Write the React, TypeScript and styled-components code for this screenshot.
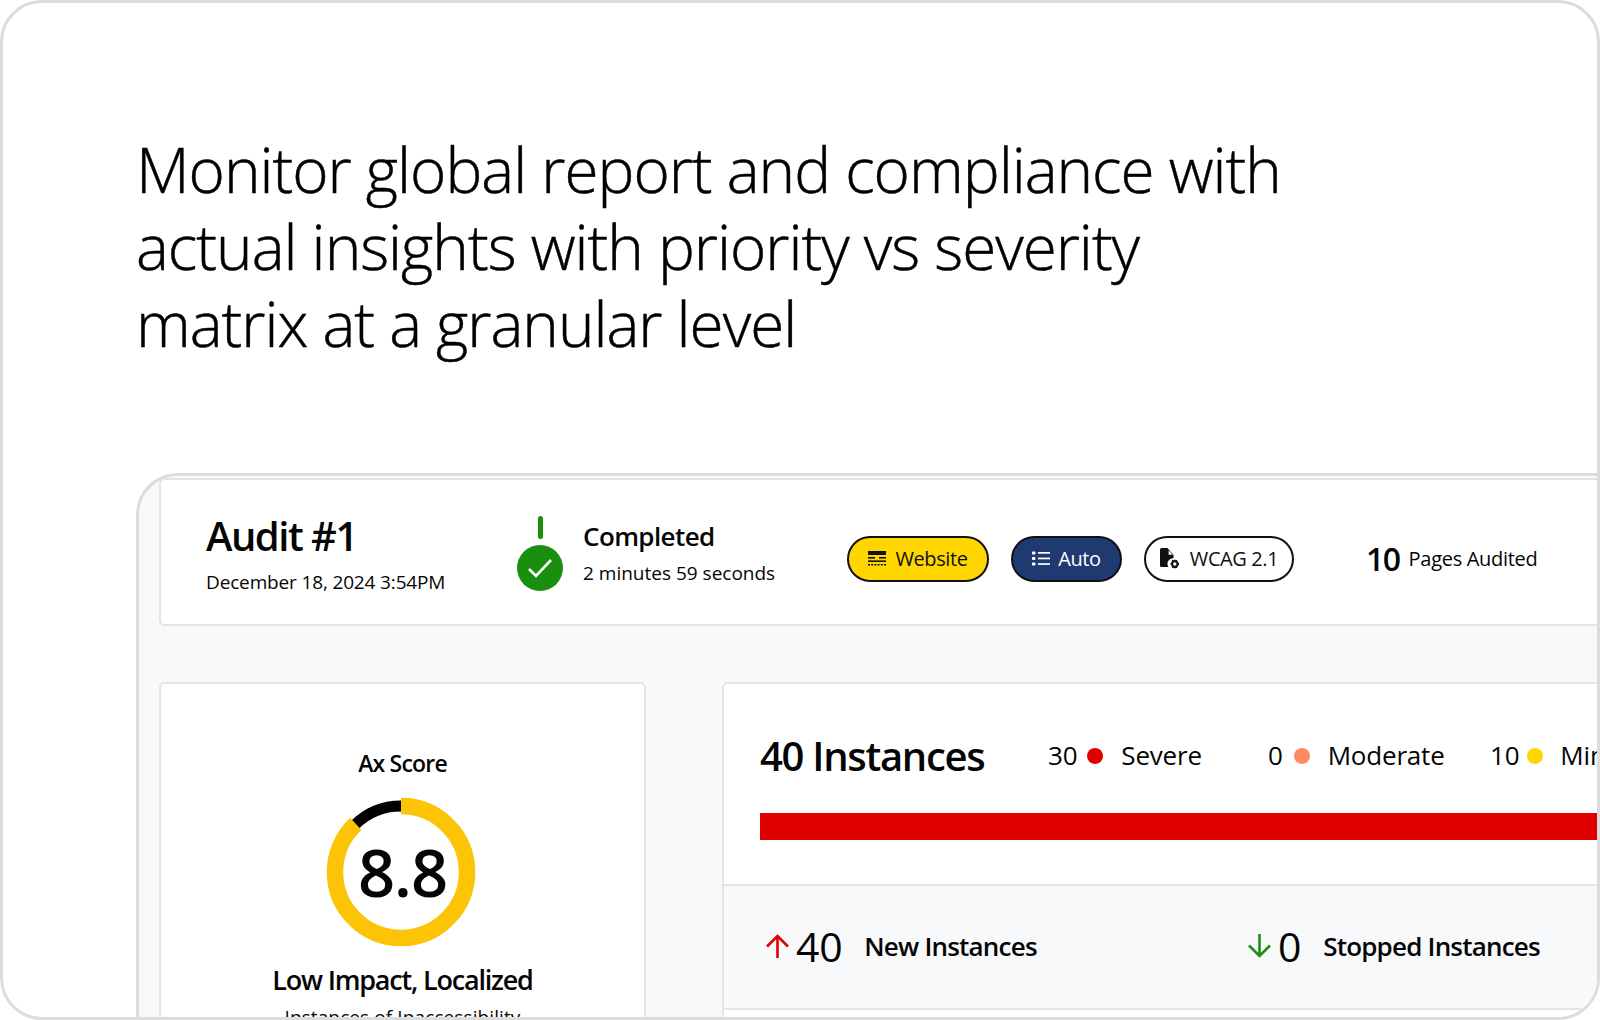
import React from "react";
import styled, { createGlobalStyle } from "styled-components";

const Global = createGlobalStyle`
  html, body { margin: 0; padding: 0; background: #fff; }
  body { font-family: "Open Sans", "Noto Sans", Arial, sans-serif; color: #050505; }
  * { box-sizing: border-box; }
`;

const Frame = styled.main`
  width: 1600px;
  height: 1020px;
  border: 3px solid #dcdcdc;
  border-radius: 42px;
  overflow: hidden;
  background: #fff;
  padding: 128px 0 0 133px;
`;

const Headline = styled.h1`
  margin: 0;
  width: 1165px;
  font-size: 62px;
  line-height: 77px;
  font-weight: 300;
  letter-spacing: -1px;
  -webkit-text-stroke: 0.5px #000;
  color: #000;
`;

const Panel = styled.section`
  margin-top: 111px;
  width: 1560px;
  height: 640px;
  background: #f8f9fb;
  border: 3px solid #dcdcdc;
  border-radius: 42px;
  padding: 2px 0 0 20px;
`;

const TopCard = styled.header`
  height: 148px;
  background: #fff;
  border: 2px solid #e4e4e4;
  border-radius: 6px;
  display: flex;
  align-items: center;
  padding-left: 45px;
`;

const AuditTitle = styled.div`
  width: 311px;
  display: flex;
  flex-direction: column;
`;

const AuditName = styled.div`
  font-size: 40px;
  line-height: 50px;
  font-weight: 600;
  letter-spacing: -1.5px;
`;

const AuditDate = styled.div`
  font-size: 19px;
  line-height: 24px;
  margin-top: 9px;
  letter-spacing: -0.15px;
`;

const StatusIcon = styled.div`
  width: 46px;
  display: flex;
  flex-direction: column;
  align-items: center;
  gap: 6px;
  margin: 2px 20px 0 0;
`;

const StatusTick = styled.span`
  width: 5px;
  height: 23px;
  border-radius: 3px;
  background: #1a8f0f;
`;

const StatusDot = styled.span`
  width: 46px;
  height: 46px;
  border-radius: 50%;
  background: #1a8f0f;
  display: flex;
  align-items: center;
  justify-content: center;
`;

const StatusText = styled.div`
  width: 264px;
  margin-top: 2px;
`;

const StatusTitle = styled.div`
  font-size: 26px;
  line-height: 34px;
  font-weight: 600;
  letter-spacing: -0.6px;
  margin-top: -2px;
`;

const StatusSub = styled.div`
  font-size: 19px;
  line-height: 26px;
  margin-top: 7px;
`;

const Pill = styled.span<{ $bg: string; $fg: string; $w: number; $gap: number }>`
  width: ${(p) => p.$w}px;
  height: 46px;
  margin: 14px 22px 0 0;
  padding-bottom: 2px;
  border: 2px solid #111;
  border-radius: 23px;
  background: ${(p) => p.$bg};
  color: ${(p) => p.$fg};
  font-size: 20px;
  display: flex;
  align-items: center;
  justify-content: center;
  gap: ${(p) => p.$gap}px;
  letter-spacing: -0.4px;
`;

const PagesCount = styled.span`
  margin: 12px 0 0 50px;
  font-size: 32px;
  font-weight: 600;
  letter-spacing: -1.5px;
`;

const PagesLabel = styled.span`
  margin: 12px 0 0 9px;
  font-size: 20px;
  letter-spacing: -0.3px;
`;

const Columns = styled.div`
  display: grid;
  grid-template-columns: 487px 1fr;
  column-gap: 76px;
  margin-top: 56px;
`;

const ScoreCard = styled.aside`
  height: 500px;
  background: #fff;
  border: 2px solid #e4e4e4;
  border-radius: 6px;
  display: flex;
  flex-direction: column;
  align-items: center;
  padding-top: 65px;
`;

const ScoreLabel = styled.div`
  font-size: 23px;
  line-height: 28px;
  font-weight: 600;
  letter-spacing: -0.8px;
`;

const RingWrap = styled.div`
  position: relative;
  width: 150px;
  height: 150px;
  margin: 20px 4px 0 0;
`;

const RingValue = styled.div`
  position: absolute;
  inset: 0 -4px 0 0;
  display: flex;
  align-items: center;
  justify-content: center;
  font-size: 65px;
  font-weight: 600;
  letter-spacing: -1px;
`;

const ImpactTitle = styled.div`
  margin-top: 15px;
  font-size: 27px;
  line-height: 36px;
  font-weight: 600;
  letter-spacing: -1.2px;
`;

const ImpactSub = styled.div`
  margin-top: 6px;
  font-size: 19px;
  line-height: 26px;
  letter-spacing: 0.1px;
`;

const InstanceCard = styled.section`
  height: 500px;
  background: #fff;
  border: 2px solid #e4e4e4;
  border-radius: 6px;
  overflow: hidden;
`;

const InstanceTop = styled.div`
  height: 202px;
  padding: 48px 0 0 36px;
  border-bottom: 2px solid #e4e4e4;
`;

const LegendRow = styled.div`
  display: flex;
  align-items: center;
  height: 46px;
  white-space: nowrap;
`;

const InstanceTitle = styled.div`
  width: 288px;
  font-size: 40px;
  font-weight: 600;
  letter-spacing: -1.3px;
`;

const LegendItem = styled.div<{ $w: number }>`
  width: ${(p) => p.$w}px;
  display: flex;
  align-items: center;
  font-size: 26px;
  letter-spacing: -0.2px;
`;

const Dot = styled.span<{ $c: string; $lead: number; $gap: number }>`
  width: 16px;
  height: 16px;
  border-radius: 50%;
  background: ${(p) => p.$c};
  margin: 2px ${(p) => p.$gap}px 0 ${(p) => p.$lead}px;
`;

const Bar = styled.div`
  height: 27px;
  margin-top: 35px;
  background: #e00000;
`;

const DeltaRow = styled.div`
  height: 124px;
  background: #f8f9fb;
  border-bottom: 2px solid #e4e4e4;
  display: flex;
  align-items: center;
  padding: 0 0 2px 41px;
`;

const Delta = styled.div<{ $w: number }>`
  width: ${(p) => p.$w}px;
  display: flex;
  align-items: center;
`;

const DeltaValue = styled.span`
  font-size: 41px;
  margin: 0 22px 0 6px;
  letter-spacing: -0.3px;
`;

const DeltaLabel = styled.span`
  font-size: 26px;
  font-weight: 600;
  letter-spacing: -0.8px;
`;

const WebsiteIcon = () => (
  <svg width="18" height="16" viewBox="0 0 18 16" fill="#111">
    <rect x="0" y="1" width="18" height="4" />
    <rect x="0" y="7" width="7" height="1.6" />
    <rect x="11" y="7" width="7" height="1.6" />
    <rect x="0" y="10.4" width="18" height="1.6" />
    <path d="M0 14h2v1.6H0zM3.2 14h2v1.6h-2zM6.4 14h2v1.6h-2zM9.6 14h2v1.6h-2zM12.8 14h2v1.6h-2zM16 14h2v1.6h-2z" />
  </svg>
);

const ListIcon = () => (
  <svg width="18" height="15" viewBox="0 0 18 15" fill="#fff">
    <rect x="0" y="0.5" width="3.4" height="3" rx="0.8" />
    <rect x="0" y="6" width="3.4" height="3" rx="0.8" />
    <rect x="0" y="11.5" width="3.4" height="3" rx="0.8" />
    <rect x="6" y="1" width="12" height="1.7" />
    <rect x="6" y="6.6" width="12" height="1.7" />
    <rect x="6" y="12.2" width="12" height="1.7" />
  </svg>
);

const FileGearIcon = () => (
  <svg width="20" height="21" viewBox="0 0 20 21" fill="#111">
    <path d="M1.5 0H7.5l6 7v3.2a5.6 5.6 0 0 0-5 8.8H1.5A1.5 1.5 0 0 1 0 17.5v-16A1.5 1.5 0 0 1 1.5 0z" />
    <path d="M8.6 2.2v4.6h3.9z" fill="#fff" />
    <circle cx="14.8" cy="16" r="2.7" fill="none" stroke="#111" strokeWidth="2" />
    <path d="M13.9 11.8h1.8v1.8h-1.8zM13.9 18.4h1.8v1.8h-1.8zM10.6 15.1h1.8v1.8h-1.8zM17.2 15.1h1.8v1.8h-1.8zM11.6 12.6l1.3-.9 1 1.4-1.3.9zM17.5 12.6l-1.3-.9-1 1.4 1.3.9zM11.6 19.4l1.3.9 1-1.4-1.3-.9zM17.5 19.4l-1.3.9-1-1.4 1.3-.9z" />
  </svg>
);

const Check = () => (
  <svg width="26" height="22" viewBox="0 0 26 22" fill="none" stroke="#fff" strokeWidth="2.6">
    <path d="M2 12l7 7L24 3" />
  </svg>
);

const Arrow = ({ up }: { up: boolean }) => (
  <svg width="25" height="24" viewBox="0 0 25 24" fill="none" stroke={up ? "#e00000" : "#1a8f0f"} strokeWidth="2.6">
    {up ? <path d="M12.5 24V2M2 12.5L12.5 2 23 12.5" /> : <path d="M12.5 0v22M2 11.5L12.5 22 23 11.5" />}
  </svg>
);

const Ring = () => (
  <svg width="150" height="150" viewBox="0 0 150 150">
    <circle cx="75" cy="75" r="66" fill="none" stroke="#000" strokeWidth="11" />
    <circle
      cx="75"
      cy="75"
      r="66"
      fill="none"
      stroke="#fdc407"
      strokeWidth="16.5"
      pathLength={100}
      strokeDasharray="88 12"
      transform="rotate(-90 75 75)"
    />
  </svg>
);

export default function App() {
  return (
    <>
      <Global />
      <Frame>
        <Headline>
          Monitor global report and compliance with actual insights with priority vs severity matrix at a granular level
        </Headline>
        <Panel>
          <TopCard>
            <AuditTitle>
              <AuditName>Audit #1</AuditName>
              <AuditDate>December 18, 2024 3:54PM</AuditDate>
            </AuditTitle>
            <StatusIcon>
              <StatusTick />
              <StatusDot>
                <Check />
              </StatusDot>
            </StatusIcon>
            <StatusText>
              <StatusTitle>Completed</StatusTitle>
              <StatusSub>2 minutes 59 seconds</StatusSub>
            </StatusText>
            <Pill $bg="#ffd600" $fg="#111" $w={142} $gap={9}>
              <WebsiteIcon />
              Website
            </Pill>
            <Pill $bg="#1f3a70" $fg="#fff" $w={111} $gap={8}>
              <ListIcon />
              Auto
            </Pill>
            <Pill $bg="#fff" $fg="#111" $w={150} $gap={10}>
              <FileGearIcon />
              WCAG 2.1
            </Pill>
            <PagesCount>10</PagesCount>
            <PagesLabel>Pages Audited</PagesLabel>
          </TopCard>
          <Columns>
            <ScoreCard>
              <ScoreLabel>Ax Score</ScoreLabel>
              <RingWrap>
                <Ring />
                <RingValue>8.8</RingValue>
              </RingWrap>
              <ImpactTitle>Low Impact, Localized</ImpactTitle>
              <ImpactSub>Instances of Inaccessibility</ImpactSub>
            </ScoreCard>
            <InstanceCard>
              <InstanceTop>
                <LegendRow>
                  <InstanceTitle>40 Instances</InstanceTitle>
                  <LegendItem $w={220}>
                    30
                    <Dot $c="#e00000" $lead={10} $gap={18} />
                    Severe
                  </LegendItem>
                  <LegendItem $w={222}>
                    0
                    <Dot $c="#ff8a65" $lead={11} $gap={18} />
                    Moderate
                  </LegendItem>
                  <LegendItem $w={160}>
                    10
                    <Dot $c="#ffd600" $lead={8} $gap={17} />
                    Minor
                  </LegendItem>
                </LegendRow>
                <Bar />
              </InstanceTop>
              <DeltaRow>
                <Delta $w={482}>
                  <Arrow up />
                  <DeltaValue>40</DeltaValue>
                  <DeltaLabel>New Instances</DeltaLabel>
                </Delta>
                <Delta $w={400}>
                  <Arrow up={false} />
                  <DeltaValue>0</DeltaValue>
                  <DeltaLabel>Stopped Instances</DeltaLabel>
                </Delta>
              </DeltaRow>
            </InstanceCard>
          </Columns>
        </Panel>
      </Frame>
    </>
  );
}
